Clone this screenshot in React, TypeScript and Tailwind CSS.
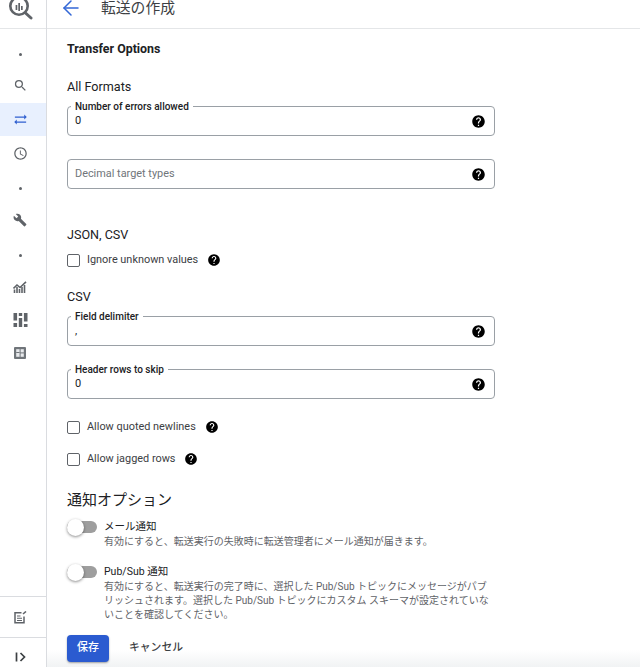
import { MdSearch, MdSyncAlt, MdSchedule, MdBuild, MdHelp } from 'react-icons/md'
import { ArrowLeft } from 'lucide-react'

const font = 'font-["Roboto","Noto_Sans_CJK_JP",sans-serif]'

function Dot({ className = '' }: { className?: string }) {
  return <div className={`h-[3px] w-[3px] rounded-full bg-[#5f6368] ${className}`} />
}

function QueryLogo() {
  return (
    <svg width="26" height="20" viewBox="0 0 26 20" fill="none">
      <circle cx="12" cy="6" r="8.7" stroke="#5f6368" strokeWidth="2.6" />
      <path d="M18.5 13l5.5 5" stroke="#5f6368" strokeWidth="3" strokeLinecap="round" />
      <rect x="8.6" y="5" width="1.7" height="5" fill="#5f6368" />
      <rect x="11.3" y="3" width="1.7" height="8" fill="#5f6368" />
      <rect x="14" y="6" width="1.7" height="4" fill="#5f6368" />
    </svg>
  )
}

function ChartIcon() {
  return (
    <svg width="14" height="12" viewBox="0 0 14 12" fill="none" stroke="#5f6368">
      <path d="M0.5 7.5L4 4l3 2.5L13 0.8" strokeWidth="1.6" />
      <path d="M1.5 12V8.5M4 12V6M6.5 12V8M9 12V6M11.5 12V4" strokeWidth="1.6" />
    </svg>
  )
}

function DashboardIcon() {
  return (
    <svg width="15" height="14" viewBox="0 0 15 14" fill="#5f6368">
      <rect x="0.5" y="0" width="3.6" height="7.5" />
      <rect x="0.5" y="10" width="3.6" height="4" />
      <rect x="5.8" y="0" width="3.4" height="3" />
      <rect x="5.8" y="5" width="3.4" height="9" />
      <rect x="10.9" y="0" width="3.6" height="8.5" />
      <rect x="10.9" y="11" width="3.6" height="3" />
    </svg>
  )
}

function TableIcon() {
  return (
    <svg width="12" height="12" viewBox="0 0 12 12">
      <rect width="12" height="12" rx="1" fill="#70757a" />
      <rect x="2.2" y="2.2" width="3.4" height="7.6" fill="#e8eaed" />
      <rect x="6.6" y="2.2" width="3.2" height="3.2" fill="#e8eaed" />
      <rect x="6.6" y="6.4" width="3.2" height="3.4" fill="#e8eaed" />
      <rect x="2.2" y="5" width="3.4" height="1" fill="#70757a" />
    </svg>
  )
}

function NoteIcon() {
  return (
    <svg width="13" height="13" viewBox="0 0 13 13" fill="none" stroke="#5f6368">
      <path d="M7.5 1.7H1v10h9V5.5" strokeWidth="1.5" />
      <path d="M3 5h3.5M3 7.3h5M3 9.5h5" strokeWidth="1.1" />
      <path d="M9 3l3-2.5" strokeWidth="1.6" />
    </svg>
  )
}

function CollapseIcon() {
  return (
    <svg width="11" height="10" viewBox="0 0 11 10" fill="none" stroke="#3c4043" strokeWidth="1.7">
      <path d="M1.5 0.5v9" />
      <path d="M5.5 1l4 4-4 4" />
    </svg>
  )
}

function Field({ label, value, placeholder }: { label?: string; value?: string; placeholder?: string }) {
  return (
    <div className="relative flex h-[30px] w-[428px] items-center justify-between rounded-[4px] border border-[#9aa0a6] pl-[7px] pr-[8px]">
      {label && (
        <span className="absolute -top-[6px] left-[3px] bg-white px-[4px] text-[10px] leading-3 font-medium text-[#202124]">
          {label}
        </span>
      )}
      {placeholder ? (
        <span className="text-[10.9px] text-[#70757a]">{placeholder}</span>
      ) : (
        <span className="pt-[1px] text-[11px] text-[#202124]">{value}</span>
      )}
      <MdHelp className="h-[15px] w-[15px] text-black" />
    </div>
  )
}

function Check({ label }: { label: string }) {
  return (
    <div className="flex h-4 items-center">
      <span className="h-[13px] w-[13px] rounded-[2px] border-[1.5px] border-[#5f6368]" />
      <span className="ml-[7px] text-[10.9px] text-[#3c4043]">{label}</span>
      <MdHelp className="ml-[9px] h-[14px] w-[14px] text-black" />
    </div>
  )
}

function Toggle() {
  return (
    <span className="relative block h-[12px] w-[30px] shrink-0 rounded-full bg-[#9e9e9e]">
      <span className="absolute -top-[2.5px] left-0 h-[17px] w-[17px] rounded-full bg-white shadow-[0_1px_3px_rgba(0,0,0,0.45)]" />
    </span>
  )
}

export default function App() {
  return (
    <div className={`flex h-[667px] w-[640px] overflow-hidden bg-white ${font}`}>
      <aside className="flex w-[47px] shrink-0 flex-col border-r border-[#dadce0]">
        <div className="flex h-[29px] shrink-0 justify-center border-b border-[#e4e6e8] pr-[6px]">
          <QueryLogo />
        </div>
        <div className="flex flex-1 flex-col items-center">
          <Dot className="mr-[6px] mt-[24px]" />
          <MdSearch className="mr-[6px] mt-[22px] h-[15px] w-[15px] text-[#5f6368]" />
          <div className="mt-[10px] flex h-[33px] w-full items-center justify-center bg-[#e8f0fe] pr-[6px]">
            <MdSyncAlt className="h-[15px] w-[15px] text-[#2f5fd0]" />
          </div>
          <MdSchedule className="mr-[6px] mt-[10px] h-[15px] w-[15px] text-[#5f6368]" />
          <Dot className="mr-[6px] mt-[26px]" />
          <MdBuild className="mr-[6px] mt-[23px] h-[14px] w-[14px] text-[#5f6368]" />
          <Dot className="mr-[6px] mt-[27px]" />
          <div className="mr-[6px] mt-[24px]">
            <ChartIcon />
          </div>
          <div className="mr-[6px] mt-[20px] leading-none">
            <DashboardIcon />
          </div>
          <div className="mr-[6px] mt-[20px] leading-none">
            <TableIcon />
          </div>
        </div>
        <div className="flex h-[41px] items-center justify-center border-t border-[#dadce0] pr-[6px]">
          <NoteIcon />
        </div>
        <div className="flex h-[30px] items-center justify-center border-t border-[#dadce0] pt-[10px] pb-[2px] pr-[6px]">
          <CollapseIcon />
        </div>
      </aside>

      <div className="relative flex min-w-0 flex-1 flex-col">
        <header className="flex h-[29px] shrink-0 items-start border-b border-[#e4e6e8]">
          <ArrowLeft size={24} strokeWidth={1.5} className="-mt-1 ml-[12px] text-[#3367d6]" />
          <h1 className="ml-[18px] text-[14.8px] leading-[16px] text-[#3c4043]">転送の作成</h1>
        </header>

        <main className="pl-5">
          <h2 className="mt-[13px] text-[12.4px] leading-[14px] font-bold text-[#202124]">Transfer Options</h2>
          <h3 className="mt-[23px] text-[12.6px] leading-[15px] text-[#202124]">All Formats</h3>
          <div className="mt-[12px] flex flex-col gap-[23px]">
            <Field label="Number of errors allowed" value="0" />
            <Field placeholder="Decimal target types" />
          </div>

          <h3 className="mt-[38px] text-[12.6px] leading-[15px] text-[#202124]">JSON, CSV</h3>
          <div className="mt-[10px]">
            <Check label="Ignore unknown values" />
          </div>

          <h3 className="mt-[21px] text-[12.6px] leading-[15px] text-[#202124]">CSV</h3>
          <div className="mt-[12px] flex flex-col gap-[23px]">
            <Field label="Field delimiter" value="," />
            <Field label="Header rows to skip" value="0" />
          </div>
          <div className="mt-[20px] flex flex-col gap-4">
            <Check label="Allow quoted newlines" />
            <Check label="Allow jagged rows" />
          </div>

          <h3 className="mt-[24px] text-[15px] leading-[18px] text-[#202124]">通知オプション</h3>
          <div className="mt-[10px] flex">
            <div className="pt-[2px]">
              <Toggle />
            </div>
            <div className="ml-[7px]">
              <p className="text-[10.5px] leading-[16px] text-[#202124]">メール通知</p>
              <p className="text-[10px] leading-[14px] text-[#5f6368]">有効にすると、転送実行の失敗時に転送管理者にメール通知が届きます。</p>
            </div>
          </div>
          <div className="mt-[15px] flex">
            <div className="pt-[2px]">
              <Toggle />
            </div>
            <div className="ml-[7px] w-[388px]">
              <p className="text-[10.5px] leading-[16px] text-[#202124]">Pub/Sub 通知</p>
              <p className="text-[10px] leading-[14px] text-[#5f6368]">
                有効にすると、転送実行の完了時に、選択した Pub/Sub トピックにメッセージがパブリッシュされます。選択した Pub/Sub トピックにカスタム スキーマが設定されていないことを確認してください。
              </p>
            </div>
          </div>
          <div className="relative z-10 mt-[13px] flex items-center">
            <button className="h-[27px] w-[42px] rounded-[4px] bg-[#2b5bd0] text-[11px] font-medium text-white shadow-[0_1px_2px_rgba(0,0,0,0.35)]">
              保存
            </button>
            <button className="ml-5 text-[10.8px] font-medium text-[#3c4043]">キャンセル</button>
          </div>
        </main>
        <div className="pointer-events-none absolute inset-x-0 bottom-0 h-[17px] bg-gradient-to-b from-white to-[#f1f3f4]" />
      </div>
    </div>
  )
}
